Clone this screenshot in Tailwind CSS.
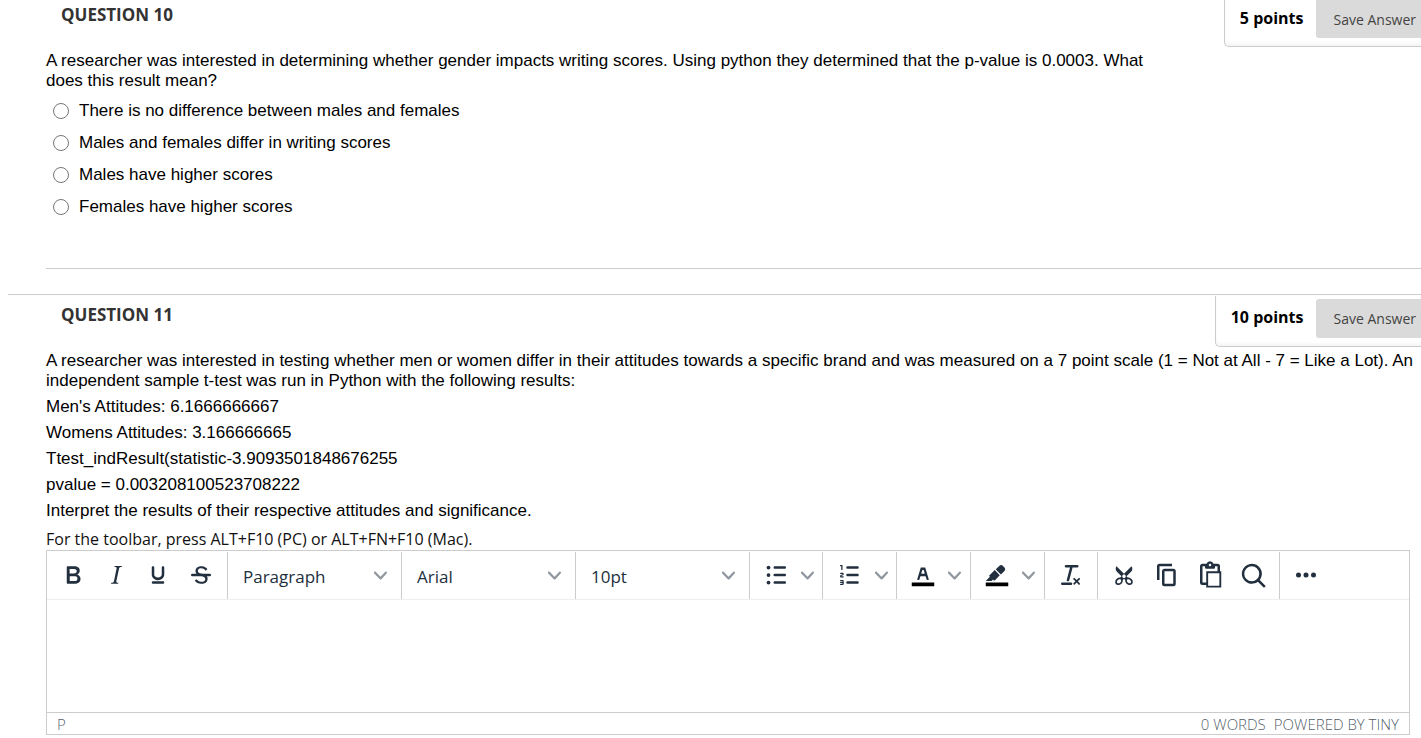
<!DOCTYPE html>
<html lang="en">
<head>
    <meta charset="UTF-8">
    <meta name="viewport" content="width=device-width, initial-scale=1.0">
    <title>Take Test</title>
    <script src="https://cdn.jsdelivr.net/npm/@tailwindcss/browser@4"></script>
</head>
<body class="bg-white text-black overflow-x-hidden font-['Open_Sans',sans-serif]">
    <!-- shared by every drop-down in the toolbar -->
    <svg class="hidden">
        <symbol id="chevron" viewBox="0 0 10 10"><path d="M8.7 2.2c.3-.3.8-.3 1 0 .4.4.4.9 0 1.2L5.7 7.8c-.3.3-.9.3-1.2 0L.2 3.4a.8.8 0 010-1.2c.3-.3.8-.3 1.1 0L5 6l3.7-3.8z"/></symbol>
    </svg>

    <section class="pl-[46px]">
        <div class="flex items-start justify-between h-[51px]">
            <h2 class="pl-[15px] pt-[3px] text-[17px] leading-6 font-bold text-[#333]">QUESTION 10</h2>
            <div class="flex items-start h-[47px] pl-[15px] border-l border-b border-[#ccc] rounded-bl-[5px] shadow-[inset_0_-3px_5px_-2px_#eee]">
                <span class="mr-3 pt-[6px] text-[16px] leading-6 font-bold">5 points</span>
                <button class="h-[38px] pl-[18px] pr-[5px] bg-[#dadada] rounded-bl-[3px] text-[14px] text-[#444]">Save Answer</button>
            </div>
        </div>
        <div class="font-['Liberation_Sans',Arial,sans-serif] text-[17px] leading-5">
            <p class="max-w-[1120px]">A researcher was interested in determining whether gender impacts writing scores. Using python they determined that the p-value is 0.0003. What does this result mean?</p>
            <div class="pt-[4px] pl-[7px]">
                <label class="flex items-center gap-[10px] h-8"><input type="radio" name="q10" class="appearance-none size-4 mb-px rounded-full border border-[#767676]">There is no difference between males and females</label>
                <label class="flex items-center gap-[10px] h-8"><input type="radio" name="q10" class="appearance-none size-4 mb-px rounded-full border border-[#767676]">Males and females differ in writing scores</label>
                <label class="flex items-center gap-[10px] h-8"><input type="radio" name="q10" class="appearance-none size-4 mb-px rounded-full border border-[#767676]">Males have higher scores</label>
                <label class="flex items-center gap-[10px] h-8"><input type="radio" name="q10" class="appearance-none size-4 mb-px rounded-full border border-[#767676]">Females have higher scores</label>
            </div>
        </div>
        <hr class="mt-[45px] border-[#ccc]">
    </section>

    <section class="mt-[25px] ml-2 pl-[38px] border-t border-[#ccc]">
        <div class="flex items-start justify-between pt-px h-[56px]">
            <h2 class="pl-[15px] pt-[7px] text-[17px] leading-6 font-bold text-[#333]">QUESTION 11</h2>
            <div class="flex items-start h-[51px] pt-[3px] pl-[15px] border-l border-b border-[#ccc] rounded-bl-[5px] shadow-[inset_0_-3px_5px_-2px_#eee]">
                <span class="mr-3 pt-[6px] text-[16px] leading-6 font-bold">10 points</span>
                <button class="h-[39px] pl-[18px] pr-[5px] bg-[#dadada] rounded-l-[3px] text-[14px] text-[#444]">Save Answer</button>
            </div>
        </div>
        <div class="flex flex-col gap-[6px] font-['Liberation_Sans',Arial,sans-serif] text-[17px] leading-5">
            <p>A researcher was interested in testing whether men or women differ in their attitudes towards a specific brand and was measured on a 7 point scale (1 = Not at All - 7 = Like a Lot). An independent sample t-test was run in Python with the following results:</p>
            <p>Men's Attitudes: 6.1666666667</p>
            <p>Womens Attitudes: 3.166666665</p>
            <p>Ttest_indResult(statistic-3.9093501848676255</p>
            <p>pvalue = 0.003208100523708222</p>
            <p>Interpret the results of their respective attitudes and significance.</p>
        </div>
        <label for="answer" class="block mt-[7px] text-[16px] leading-[22px] text-[#111]">For the toolbar, press ALT+F10 (PC) or ALT+FN+F10 (Mac).</label>

        <div class="mr-[11px] border border-[#ccc]">
            <div class="flex h-[49px] border-b border-[#eee] text-[#222f3e] fill-[#222f3e] pt-px">
                <div class="flex items-center w-[181px] px-[5px] pb-px border-r border-[#ccc]">
                    <button aria-label="Bold" class="flex-1 flex justify-center"><svg class="size-[30px]" viewBox="0 0 24 24"><path fill-rule="evenodd" d="M7.8 19c-.3 0-.5 0-.6-.2l-.2-.5V5.7c0-.2 0-.4.2-.5l.6-.2h5c1.5 0 2.7.3 3.5 1 .7.6 1.1 1.4 1.1 2.5a3 3 0 01-.6 1.9c-.4.6-1 1-1.6 1.2.4.1.9.3 1.3.6s.8.7 1 1.2c.4.4.5 1 .5 1.6 0 1.3-.4 2.3-1.3 3-.8.7-2.1 1-3.8 1H7.8zm5-8.3c.6 0 1.2-.1 1.6-.5.4-.3.6-.7.6-1.3 0-1.1-.8-1.7-2.3-1.7H9.3v3.5h3.4zm.5 6c.7 0 1.3-.1 1.7-.4.4-.4.6-.9.6-1.5s-.2-1-.7-1.4c-.4-.3-1-.4-2-.4H9.4v3.8h4z"/></svg></button>
                    <button aria-label="Italic" class="flex-1 flex justify-center"><svg class="size-[30px]" viewBox="0 0 24 24"><path d="M16.7 4.7l-.1.9h-.3c-.6 0-1 0-1.4.3-.3.3-.4.6-.5 1.1l-2.1 9.8v.6c0 .5.4.8 1.4.8h.2l-.2.8H8l.2-.8h.2c1.1 0 1.8-.5 2-1.5l2-9.8.1-.5c0-.6-.4-.8-1.4-.8h-.3l.2-.9h5.8z"/></svg></button>
                    <button aria-label="Underline" class="flex-1 flex justify-center"><svg class="size-[30px]" viewBox="0 0 24 24"><path d="M16 5c.6 0 1 .4 1 1v5.5a4 4 0 01-.4 1.8l-1 1.4a5.3 5.3 0 01-5.5 1 5 5 0 01-1.6-1c-.5-.4-.8-.9-1.1-1.4a4 4 0 01-.4-1.8V6c0-.6.4-1 1-1s1 .4 1 1v5.5c0 .3 0 .6.2 1l.6.7a3.3 3.3 0 002.2.8 3.4 3.4 0 002.2-.8c.3-.2.4-.5.6-.8l.2-.9V6c0-.6.4-1 1-1zM8 17h8c.6 0 1 .4 1 1s-.4 1-1 1H8a1 1 0 010-2z"/></svg></button>
                    <button aria-label="Strikethrough" class="flex-1 flex justify-center"><svg class="size-[30px]" viewBox="0 0 24 24"><path d="M15.6 8.5c-.5-.7-1-1.1-1.3-1.3-.6-.4-1.3-.6-2-.6-2.7 0-2.8 1.7-2.8 2.1 0 1.6 1.8 2 3.2 2.3 4.4.9 4.6 2.8 4.6 3.9 0 1.4-.7 4.1-5 4.1A6.2 6.2 0 017 16.4l1.5-1.1c.4.6 1.6 2 3.7 2 1.6 0 2.5-.4 3-1.2.4-.8.3-2-.8-2.6-.7-.4-1.6-.7-2.9-1-1-.2-3.9-.8-3.9-3.6C7.6 6 10.3 5 12.4 5c2.9 0 4.2 1.6 4.7 2.4l-1.5 1.1z"/><path d="M5 11h14a1 1 0 010 2H5a1 1 0 010-2z"/></svg></button>
                </div>
                <div class="relative w-[174px] border-r border-[#ccc]">
                    <select aria-label="Block style" class="appearance-none w-full h-full pl-[15px] pt-[3px] text-[17px]"><option>Paragraph</option></select>
                    <svg class="absolute right-[14px] top-[17px] size-[13px] fill-[#222f3e]/50 pointer-events-none"><use href="#chevron"/></svg>
                </div>
                <div class="relative w-[174px] border-r border-[#ccc]">
                    <select aria-label="Font" class="appearance-none w-full h-full pl-[15px] pt-[3px] text-[17px]"><option>Arial</option></select>
                    <svg class="absolute right-[14px] top-[17px] size-[13px] fill-[#222f3e]/50 pointer-events-none"><use href="#chevron"/></svg>
                </div>
                <div class="relative w-[174px] border-r border-[#ccc]">
                    <select aria-label="Font size" class="appearance-none w-full h-full pl-[15px] pt-[3px] text-[17px]"><option>10pt</option></select>
                    <svg class="absolute right-[14px] top-[17px] size-[13px] fill-[#222f3e]/50 pointer-events-none"><use href="#chevron"/></svg>
                </div>
                <div class="flex items-center w-[73px] pl-[11px] gap-[10px] pb-px border-r border-[#ccc]">
                    <button aria-label="Bullet list"><svg class="size-[30px]" viewBox="0 0 24 24"><path d="M11 5h8c.6 0 1 .4 1 1s-.4 1-1 1h-8a1 1 0 010-2zm0 6h8c.6 0 1 .4 1 1s-.4 1-1 1h-8a1 1 0 010-2zm0 6h8c.6 0 1 .4 1 1s-.4 1-1 1h-8a1 1 0 010-2z"/><circle cx="6" cy="6" r="1.5"/><circle cx="6" cy="12" r="1.5"/><circle cx="6" cy="18" r="1.5"/></svg></button>
                    <button aria-label="Bullet list styles"><svg class="size-[13px] fill-[#222f3e]/50"><use href="#chevron"/></svg></button>
                </div>
                <div class="flex items-center w-[74px] pl-[12px] gap-[10px] pb-px border-r border-[#ccc]">
                    <button aria-label="Numbered list"><svg class="size-[30px]" viewBox="0 0 24 24"><path d="M10 17h8c.6 0 1 .4 1 1s-.4 1-1 1h-8a1 1 0 010-2zm0-6h8c.6 0 1 .4 1 1s-.4 1-1 1h-8a1 1 0 010-2zm0-6h8c.6 0 1 .4 1 1s-.4 1-1 1h-8a1 1 0 110-2zM6 4v3.5c0 .3-.2.5-.5.5a.5.5 0 01-.5-.5V5h-.5a.5.5 0 010-1H6zm-1 8.8l.2.2h1.3c.3 0 .5.2.5.5s-.2.5-.5.5H4.9a1 1 0 01-.9-1V13c0-.4.3-.8.6-1l1.2-.4.2-.3a.2.2 0 00-.2-.2H4.5a.5.5 0 01-.5-.5c0-.3.2-.5.5-.5h1.6c.5 0 .9.4.9 1v.1c0 .4-.3.8-.6 1l-1.2.4-.2.3zM7 17v2c0 .6-.4 1-1 1H4.5a.5.5 0 010-1h1.2c.2 0 .3-.1.3-.3 0-.2-.1-.3-.3-.3H4.4a.4.4 0 110-.8h1.3c.2 0 .3-.1.3-.3 0-.2-.1-.3-.3-.3H4.5a.5.5 0 110-1H6c.6 0 1 .4 1 1z"/></svg></button>
                    <button aria-label="Numbered list styles"><svg class="size-[13px] fill-[#222f3e]/50"><use href="#chevron"/></svg></button>
                </div>
                <div class="flex items-center w-[74px] pl-[11px] gap-[10px] pb-px border-r border-[#ccc]">
                    <button aria-label="Text color"><svg class="size-[30px]" viewBox="0 0 24 24"><path fill="#000" d="M3 18h18v3H3z"/><path fill-rule="evenodd" d="M8.7 16h-.8a.5.5 0 01-.5-.6l2.7-9c.1-.3.3-.4.5-.4h2.8c.2 0 .4.1.5.4l2.7 9a.5.5 0 01-.5.6h-.8a.5.5 0 01-.4-.4l-.7-2.2c0-.3-.3-.4-.5-.4h-3.4c-.2 0-.4.1-.5.4l-.7 2.2c0 .3-.2.4-.4.4zm2.6-7.6l-.6 2a.5.5 0 00.5.6h1.6a.5.5 0 00.5-.6l-.6-2c0-.3-.3-.4-.5-.4h-.4c-.2 0-.4.1-.5.4z"/></svg></button>
                    <button aria-label="Text color menu"><svg class="size-[13px] fill-[#222f3e]/50"><use href="#chevron"/></svg></button>
                </div>
                <div class="flex items-center w-[74px] pl-[11px] gap-[10px] pb-px border-r border-[#ccc]">
                    <button aria-label="Background color"><svg class="size-[30px]" viewBox="0 0 24 24"><path fill="#000" d="M3 18h18v3H3z"/><path d="M7.7 16.7H3l3.3-3.3-.7-.8L10.2 8l4 4.1-4 4.2c-.2.2-.6.2-.8 0l-.6-.7-1.1 1.1zm5-7.5L11 7.4l3-2.9a2 2 0 012.6 0L18 6c.7.7.7 2 0 2.7l-2.9 2.9-1.8-1.8-.5-.6"/></svg></button>
                    <button aria-label="Background color menu"><svg class="size-[13px] fill-[#222f3e]/50"><use href="#chevron"/></svg></button>
                </div>
                <div class="flex items-center justify-center w-[53px] pb-px border-r border-[#ccc]">
                    <button aria-label="Clear formatting"><svg class="size-[30px]" viewBox="0 0 24 24"><path d="M13.2 6a1 1 0 010 .2l-2.6 10a1 1 0 01-1 .8h-.2a.8.8 0 01-.8-1l2.6-10H8a1 1 0 110-2h9a1 1 0 010 2h-3.8zM5 18h7a1 1 0 010 2H5a1 1 0 010-2zm13 1.5L16.5 18 15 19.5a.7.7 0 01-1-1l1.5-1.5-1.5-1.5a.7.7 0 011-1l1.5 1.5 1.5-1.5a.7.7 0 011 1L17.5 17l1.5 1.5a.7.7 0 01-1 1z"/></svg></button>
                </div>
                <div class="flex items-center w-[182px] px-[5px] pb-px border-r border-[#ccc]">
                    <button aria-label="Cut" class="flex-1 flex justify-center"><svg class="size-[30px]" viewBox="0 0 24 24"><path d="M18 15c.6.7 1 1.4 1 2.3 0 .8-.2 1.5-.7 2l-.8.5-1 .2c-.4 0-.8 0-1.2-.3a3.9 3.9 0 01-2.1-2.2c-.2-.5-.3-1-.2-1.5l-1-1-1 1c0 .5 0 1-.2 1.5-.1.5-.4 1-.9 1.4-.3.4-.7.6-1.2.8l-1.2.3c-.4 0-.7 0-1-.2-.3 0-.6-.3-.8-.5-.5-.5-.8-1.2-.7-2 0-.9.4-1.6 1-2.2A3.7 3.7 0 018.6 14H9l1-1-4-4-.5-1a3.3 3.3 0 010-2c0-.4.3-.7.5-1l6 6 6-6 .5 1a3.3 3.3 0 010 2c0 .4-.3.7-.5 1l-4 4 1 1h.5c.4 0 .8 0 1.2.3.5.2.9.4 1.2.8zm-8.5 2.2l.1-.4v-.7a1 1 0 00-.2-.5 1 1 0 00-.4-.2 1.6 1.6 0 00-.8 0 2.6 2.6 0 00-.8.3 2.5 2.5 0 00-.9 1.1l-.1.4v.7l.2.5.5.2h.7a2.5 2.5 0 00.8-.3 2.8 2.8 0 001-1zm2.5-2.8c.4 0 .7-.1 1-.4.3-.3.4-.6.4-1s-.1-.7-.4-1c-.3-.3-.6-.4-1-.4s-.7.1-1 .4c-.3.3-.4.6-.4 1s.1.7.4 1c.3.3.6.4 1 .4zm5.4 4l.2-.5v-.7a2.6 2.6 0 00-.3-.8 2.4 2.4 0 00-.7-.7 2.5 2.5 0 00-.8-.3 1.5 1.5 0 00-.8 0 1 1 0 00-.4.2 1 1 0 00-.2.5 1.5 1.5 0 000 .7v.4l.3.4.3.4a2.8 2.8 0 00.8.5l.4.1h.7l.5-.2z" fill-rule="evenodd"/></svg></button>
                    <button aria-label="Copy" class="flex-1 flex justify-center"><svg class="size-[30px]" viewBox="0 0 24 24"><path fill-rule="evenodd" d="M16 3H6a2 2 0 00-2 2v11h2V5h10V3zm1 4a2 2 0 012 2v10a2 2 0 01-2 2h-7a2 2 0 01-2-2V9c0-1.2.9-2 2-2h7zm0 12V9h-7v10h7z"/></svg></button>
                    <button aria-label="Paste" class="flex-1 flex justify-center"><svg class="size-[30px]" viewBox="0 0 24 24"><path fill-rule="evenodd" d="M18 9V5h-2v1c0 .6-.4 1-1 1H9a1 1 0 01-1-1V5H6v13h3V9h9zM9 20H6a2 2 0 01-2-2V5c0-1.1.9-2 2-2h3.2A3 3 0 0112 1a3 3 0 012.8 2H18a2 2 0 012 2v4h1v13H9v-2zm1.5-9.5v10h9v-10h-9zM12 3a1 1 0 00-1 1c0 .5.4 1 1 1s1-.5 1-1-.4-1-1-1z"/></svg></button>
                    <button aria-label="Find and replace" class="flex-1 flex justify-center"><svg class="size-[30px]" viewBox="0 0 24 24"><path fill-rule="evenodd" d="M16 17.3a8 8 0 111.4-1.4l4.3 4.4a1 1 0 01-1.4 1.4l-4.4-4.3zm-5-.3a6 6 0 100-12 6 6 0 000 12z"/></svg></button>
                </div>
                <div class="flex items-center pl-[11px] pb-px">
                    <button aria-label="More"><svg class="size-[30px]" viewBox="0 0 24 24"><circle cx="6" cy="12" r="2"/><circle cx="12" cy="12" r="2"/><circle cx="18" cy="12" r="2"/></svg></button>
                </div>
            </div>
            <textarea id="answer" class="block w-full h-[112px] p-3 resize-none outline-none"></textarea>
            <div class="flex justify-between h-[22px] px-[10px] border-t border-[#ccc] text-[15px] leading-[22px] font-light text-[#222f3e]/80">
                <span>P</span>
                <div class="flex gap-2">
                    <button>0 WORDS</button>
                    <a href="#">POWERED BY TINY</a>
                </div>
            </div>
        </div>
    </section>
</body>
</html>
